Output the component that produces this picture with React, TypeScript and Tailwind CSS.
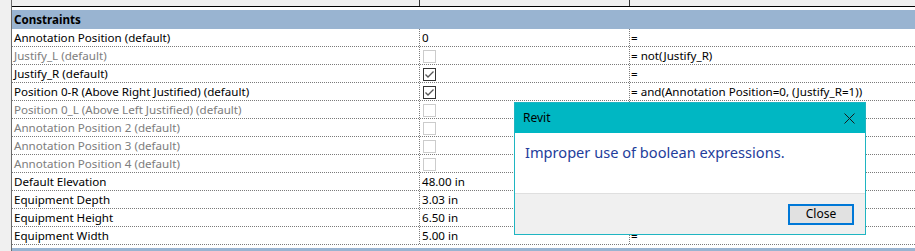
import React from 'react';

type Row = {
  name: string;
  value?: string;
  check?: 'on' | 'off';
  formula: string;
  dim?: boolean;
};

// formulas for rows sitting under the dialog are left blank (not visible)
const rows: Row[] = [
  { name: 'Annotation Position (default)', value: '0', formula: '=' },
  { name: 'Justify_L (default)', check: 'off', formula: '= not(Justify_R)', dim: true },
  { name: 'Justify_R (default)', check: 'on', formula: '=' },
  { name: 'Position 0-R (Above Right Justified) (default)', check: 'on', formula: '= and(Annotation Position=0, (Justify_R=1))' },
  { name: 'Position 0_L (Above Left Justified) (default)', check: 'off', formula: '', dim: true },
  { name: 'Annotation Position 2 (default)', check: 'off', formula: '', dim: true },
  { name: 'Annotation Position 3 (default)', check: 'off', formula: '', dim: true },
  { name: 'Annotation Position 4 (default)', check: 'off', formula: '', dim: true },
  { name: 'Default Elevation', value: '48.00 in', formula: '' },
  { name: 'Equipment Depth', value: '3.03 in', formula: '' },
  { name: 'Equipment Height', value: '6.50 in', formula: '' },
  { name: 'Equipment Width', value: '5.00 in', formula: '=' },
];

const CheckBox: React.FC<{ on: boolean }> = ({ on }) =>
  on ? (
    <div className="w-[13px] h-[13px] border border-[#333333] bg-white flex items-center justify-center">
      <svg width="11" height="11" viewBox="0 0 11 11">
        <path d="M1.5 5.5 L4 8 L9.5 2.5" fill="none" stroke="#555555" strokeWidth="1.3" />
      </svg>
    </div>
  ) : (
    <div className="w-[13px] h-[13px] border border-[#cccccc] bg-white" />
  );

export default function App() {
  return (
    <div
      className="relative w-[915px] h-[251px] overflow-hidden flex bg-[#f0f0f0] text-[11.6px] text-black"
      style={{ fontFamily: '"Segoe UI", "Noto Sans", "Open Sans", sans-serif' }}
    >
      {/* left gutter */}
      <div className="w-[11px] shrink-0" />

      <div className="flex-1 flex flex-col border-l border-[#6b6b6b] bg-white">
        {/* column header strip */}
        <div className="h-[7px] shrink-0 grid grid-cols-[408px_210px_1fr] bg-[#f0f0f0] border-b border-black">
          <div className="border-r border-[#333333]" />
          <div className="border-r border-[#333333]" />
          <div />
        </div>

        <div className="h-[3px] shrink-0" />

        {/* group header */}
        <div className="h-[19px] shrink-0 bg-[#99b4d1] flex items-center pl-[2px] font-bold leading-none">
          Constraints
        </div>

        {/* parameter rows */}
        {rows.map((r, i) => (
          <div
            key={i}
            className="h-[18px] shrink-0 grid grid-cols-[408px_210px_1fr] border-b border-dotted border-[#7a7a7a] leading-none"
          >
            <div
              className={`border-r border-dotted border-[#7a7a7a] pl-[2px] flex items-center whitespace-nowrap ${
                r.dim ? 'text-[#7d7d7d]' : 'text-black'
              }`}
            >
              {r.name}
            </div>
            <div className="border-r border-dotted border-[#7a7a7a] pl-[2px] flex items-center">
              {r.check ? (
                <div className="pl-[1px] pt-[1px]">
                  <CheckBox on={r.check === 'on'} />
                </div>
              ) : (
                <span>{r.value}</span>
              )}
            </div>
            <div className="pl-[1px] flex items-center whitespace-nowrap">{r.formula}</div>
          </div>
        ))}

        <div className="h-[3px] shrink-0" />
        <div className="flex-1 bg-[#99b4d1]" />
      </div>

      {/* error dialog */}
      <div className="absolute left-[514px] top-[102px] w-[352px] h-[133px] border border-[#1fb5c2] bg-white flex flex-col">
        <div className="h-[30px] shrink-0 bg-[#00b7c3] flex items-center justify-between pl-[8px] pr-[10px]">
          <span className="text-[12px] text-black">Revit</span>
          <svg width="11" height="11" viewBox="0 0 11 11">
            <path d="M0.5 0.5 L10.5 10.5 M10.5 0.5 L0.5 10.5" stroke="#1a1a1a" strokeWidth="1" />
          </svg>
        </div>
        <div className="h-[60px] shrink-0 pl-[10px] pt-[12px] text-[14.6px] text-[#233d9b] leading-none">
          Improper use of boolean expressions.
        </div>
        <div className="flex-1 bg-[#f0f0f0] border-t border-[#dfdfdf] flex items-center justify-end pr-[11px]">
          <div className="w-[66px] h-[21px] border-2 border-[#0078d7] bg-[#e1e1e1] flex items-center justify-center text-[12px] leading-none">
            Close
          </div>
        </div>
      </div>
    </div>
  );
}
